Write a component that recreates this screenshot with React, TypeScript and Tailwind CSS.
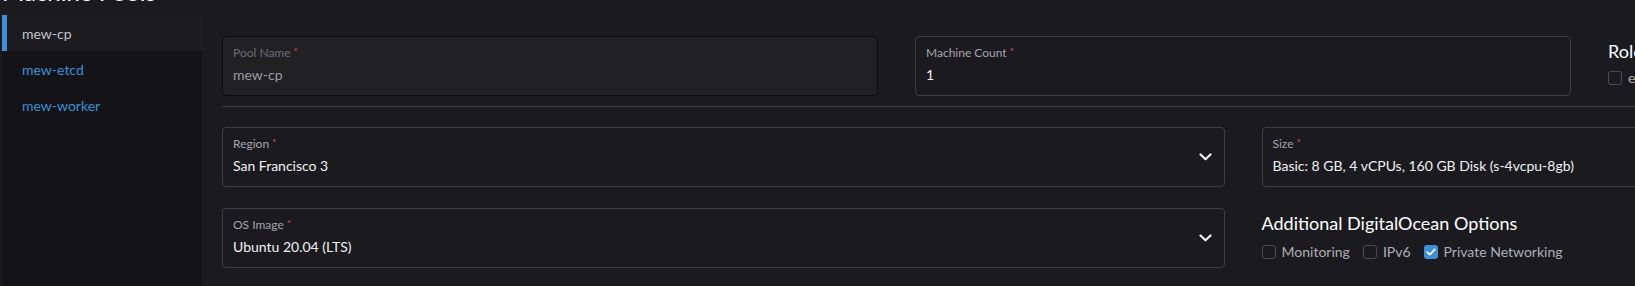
import React from 'react';

const POOLS = ['mew-cp', 'mew-etcd', 'mew-worker'];

const Required = () => <span className="ml-[3px] text-[#e5484d] align-top text-[10px] leading-none relative top-[1px]">*</span>;

const Chevron = () => (
  <svg width="13" height="8" viewBox="0 0 13 8" fill="none">
    <path d="M1.5 1.5 L6.5 6.3 L11.5 1.5" stroke="#f2f2f5" strokeWidth="2.2" strokeLinecap="round" strokeLinejoin="round" />
  </svg>
);

const Checkbox = ({ checked, label }: { checked?: boolean; label: string }) => (
  <label className="flex items-center gap-[6px]">
    {checked ? (
      <span className="w-[14px] h-[14px] rounded-[3px] bg-[#3d8fd6] flex items-center justify-center">
        <svg width="10" height="8" viewBox="0 0 10 8" fill="none">
          <path d="M1.2 4.2 L3.8 6.6 L8.8 1.3" stroke="#ffffff" strokeWidth="1.7" strokeLinecap="round" strokeLinejoin="round" />
        </svg>
      </span>
    ) : (
      <span className="w-[14px] h-[14px] rounded-[3px] border border-[#4a4a52]" />
    )}
    <span className="text-[14px] leading-5 text-[#aeaeb6]">{label}</span>
  </label>
);

type FieldProps = { label: string; value: string; disabled?: boolean; select?: boolean };

const Field = ({ label, value, disabled, select }: FieldProps) => (
  <div
    className={
      disabled
        ? 'h-[60px] rounded-[4px] border border-[#0c0c0e] bg-[#212124] px-[10px] pt-[8px] flex items-start'
        : 'h-[60px] rounded-[4px] border border-[#3d3d44] bg-[#1b1b1f] px-[10px] pt-[8px] flex items-start'
    }
  >
    <div className="flex-1 min-w-0">
      <div className={disabled ? 'text-[12px] leading-4 text-[#6b6b78]' : 'text-[12px] leading-4 text-[#a3a3ab]'}>
        {label}
        <Required />
      </div>
      <div className={disabled ? 'mt-1 text-[14px] leading-5 text-[#9c9ca3]' : 'mt-1 text-[14px] leading-5 text-[#f0f0f3]'}>
        {value}
      </div>
    </div>
    {select && (
      <div className="self-center -mt-[8px] mr-[2px]">
        <Chevron />
      </div>
    )}
  </div>
);

export default function App() {
  return (
    <div className="w-[1635px] h-[286px] overflow-hidden bg-[#1b1b1f] text-white" style={{ fontFamily: 'Lato, "Open Sans", sans-serif' }}>
      <h2 className="-mt-[24px] pl-[2px] text-[24px] leading-[32px] text-white whitespace-nowrap">Machine Pools</h2>
      <div className="mt-[7px] flex h-[280px]">
        <div className="ml-[2px] w-[200px] shrink-0 bg-[#141418]">
          {POOLS.map((p, i) =>
            i === 0 ? (
              <div key={p} className="h-[36px] flex items-center bg-[#1c1c21] border-l-[5px] border-[#3d8fd6] pl-[15px] text-[14px] text-[#c2c2c9]">
                {p}
              </div>
            ) : (
              <div key={p} className="h-[36px] flex items-center pl-[20px] text-[14px] text-[#3d8fd6]">
                {p}
              </div>
            )
          )}
        </div>
        <div className="shrink-0 w-[2062px] pl-[20px] pt-[21px]">
          <div className="grid grid-cols-3 gap-x-[37px]">
            <Field label="Pool Name" value="mew-cp" disabled />
            <Field label="Machine Count" value="1" />
            <div>
              <div className="mt-[3px] text-[18px] leading-6 text-white">Roles</div>
              <div className="mt-[5px] flex gap-[13px]">
                <Checkbox label="etcd" />
                <Checkbox label="Control Plane" />
                <Checkbox label="Worker" />
              </div>
            </div>
          </div>
          <div className="mt-[10px] h-px bg-[#3c3c43]" />
          <div className="mt-[20px] grid grid-cols-2 gap-x-[37px] gap-y-[21px]">
            <Field label="Region" value="San Francisco 3" select />
            <Field label="Size" value="Basic: 8 GB, 4 vCPUs, 160 GB Disk (s-4vcpu-8gb)" select />
            <Field label="OS Image" value="Ubuntu 20.04 (LTS)" select />
            <div>
              <div className="mt-[3px] text-[18px] leading-6 text-white">Additional DigitalOcean Options</div>
              <div className="mt-[7px] flex gap-[13px]">
                <Checkbox label="Monitoring" />
                <Checkbox label="IPv6" />
                <Checkbox label="Private Networking" checked />
              </div>
            </div>
          </div>
        </div>
      </div>
    </div>
  );
}
